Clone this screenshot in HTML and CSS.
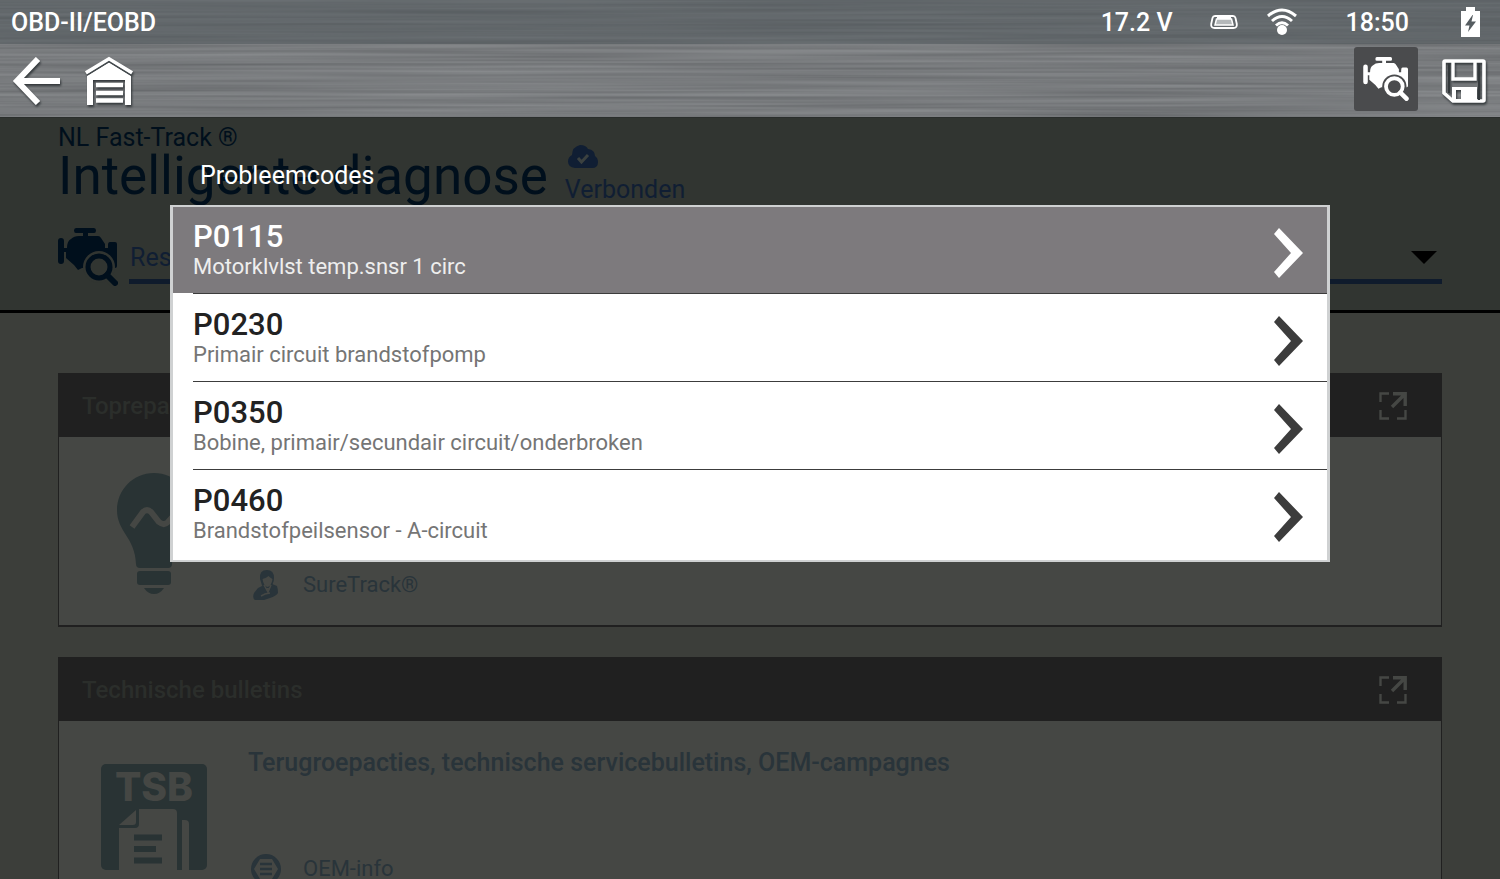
FILE: index.html
```html
<!DOCTYPE html>
<html lang="nl">
<head>
<meta charset="utf-8">
<title>OBD-II/EOBD</title>
<link rel="stylesheet" href="styles.css">
</head>
<body>
<svg class="defs" aria-hidden="true">
  <symbol id="engine" viewBox="0 0 60 58">
    <path d="M18 0h18q2 0 2 2.500t-2 2.500h-6v3h10q2 0 3 2l4 6v4h3v-3q0-3 2-3h5q2 0 2 2v22q0 2-2 2h-5q-2 0-2-2v-3h-3l-3 5H24l-4 2-4-5-8-7v-6H6v9q0 3-3 3t-3-3V13q0-3 3-3t3 3v7h3q0-7 4-9 3-3 8-3h4V5h-7q-2 0-2-2.500T18 0z"/>
    <circle class="knock" cx="41" cy="39" r="16"/>
    <path class="knock-line" d="M50 48l8 8"/>
    <circle class="lens" cx="41" cy="39" r="11"/>
    <path class="handle" d="M49 47l8 8"/>
  </symbol>
  <symbol id="chevron" viewBox="0 0 30 50"><path d="M6 0L30 25 6 50 1 44 18 25 1 6z"/></symbol>
  <symbol id="expand" viewBox="0 0 28 28"><path d="M1.500 10V1.500H10M1.500 18v8.500H10M18 26.500h8.500V18" fill="none" stroke="currentColor" stroke-width="2.400"/><path d="M14 1.800h12.200V14M25 3L13 15" fill="none" stroke="currentColor" stroke-width="3.400"/></symbol>
</svg>

<header class="top">
  <svg class="metal" aria-hidden="true" preserveAspectRatio="none">
    <filter id="brushed" x="0" y="0" width="100%" height="100%" color-interpolation-filters="sRGB">
      <feTurbulence type="fractalNoise" baseFrequency="0.003 0.3" numOctaves="2" seed="8"/>
      <feColorMatrix values="0.170 0 0 0 0.388  0.170 0 0 0 0.398  0.170 0 0 0 0.408  0 0 0 0 1"/>
    </filter>
    <rect width="100%" height="100%" filter="url(#brushed)"/>
  </svg>
  <div class="status">
    <span class="mode">OBD-II/EOBD</span>
    <span class="volt">17.2 V</span>
    <svg class="plug" viewBox="0 0 28 14"><path d="M5 1h18q2 0 2.500 2l1.300 6q.5 4-3.500 4H4.700Q.7 13 1.200 9l1.300-6Q3 1 5 1z" fill="none" stroke="#fff" stroke-width="1.800"/><path d="M6.500 4h15l1.500 6H5z" fill="#b4b8ba" stroke="#fff" stroke-width="1.500"/><path d="M7 3h14" stroke="#fff" stroke-width="2"/></svg>
    <svg class="wifi" viewBox="0 0 30 28"><g fill="none" stroke="#fff" stroke-width="3"><path d="M1 8Q15-4 29 8"/><path d="M5 13Q15 4 25 13"/><path d="M9 17.500Q15 12 21 17.500"/></g><circle cx="15" cy="22" r="5" fill="#fff"/></svg>
    <span class="clock">18:50</span>
    <svg class="battery" viewBox="0 0 19 30"><path d="M5 0h9v4h5v26H0V4h5z" fill="#fff"/><path d="M11.500 8L4 18.500h4.500L7 25l8-10.500h-4.500L12 8z" fill="#555c60"/></svg>
  </div>
  <nav class="tools">
    <button class="tool" aria-label="Terug"><svg class="back" viewBox="0 0 50 48"><path d="M27 2L6 24l21 22M6 24h43" fill="none" stroke="#fff" stroke-width="6"/></svg></button>
    <button class="tool" aria-label="Start"><svg class="home" viewBox="0 0 50 50"><path d="M2 17L25 3l23 14" fill="none" stroke="#fff" stroke-width="4"/><path d="M3 20L25 6.500 47 20v29h-6V24H9v25H3z" fill="#fff"/><path d="M3 19L25 5.500 47 19" fill="none" stroke="#444a4e" stroke-width="1.300"/><path d="M12 29h27M12 37h27M12 44.500h27" stroke="#fff" stroke-width="4.500"/></svg></button>
    <span class="spacer"></span>
    <button class="tool active" aria-label="Motordiagnose"><svg class="engine-light"><use href="#engine"/></svg></button>
    <button class="tool" aria-label="Opslaan"><svg class="save" viewBox="0 0 44 44"><path d="M3 2h38q1 0 1 1v38q0 1-1 1H11L2 34V3q0-1 1-1z" fill="none" stroke="#fff" stroke-width="3.600"/><path d="M11 3v17h22V3" fill="none" stroke="#fff" stroke-width="3.400"/><path d="M7 4v30M37 4v37" stroke="#33383b" stroke-width="2"/><path fill-rule="evenodd" d="M10 28h25v14H10zm4 3h5v9h-5z" fill="#fff"/></svg></button>
  </nav>
</header>

<main>
  <section class="hero">
    <div class="titles">
      <h1><small>NL Fast-Track ®</small>Intelligente diagnose</h1>
      <p class="connected">
        <svg class="cloud" viewBox="0 0 30 24"><path d="M7 23Q0 22 0 16.500 0 12 4 10 4 2 12 0q6 0 8 4 7 1 7 7 3 2 3 6 0 6-6 6z" fill="currentColor"/><path d="M10 13l3.500 4L20 10" fill="none" stroke="#3b4140" stroke-width="3"/></svg>
        Verbonden
      </p>
    </div>
    <div class="picker">
      <svg class="engine-dark"><use href="#engine"/></svg>
      <div class="select-wrap">
        <select aria-label="Resultaten"><option>Resultaten</option></select>
        <svg class="caret" viewBox="0 0 26 13"><path d="M0 0h26L13 13z"/></svg>
      </div>
    </div>
  </section>

  <div class="cards">
    <article class="card">
      <header><h2>Topreparaties</h2><button class="expand" aria-label="Topreparaties vergroten"><svg><use href="#expand"/></svg></button></header>
      <div class="card-body">
        <svg class="bulb" viewBox="0 0 74 121"><path d="M37 0c21 0 37 17 37 37 0 22-18 27-19 54q0 4-4 4H23q-4 0-4-4C18 64 0 59 0 37 0 17 16 0 37 0z" fill="currentColor"/><path d="M15 54l11-15q4-4 8 0l8 10q5 4 9 0l9-10" fill="none" stroke="#454744" stroke-width="6"/><rect x="20" y="98" width="34" height="14" rx="3" fill="currentColor"/><path d="M27 115h20q-4 6-10 6t-10-6z" fill="currentColor"/></svg>
        <div class="info">
          <a class="source" href="#suretrack"><svg class="source-icon" viewBox="0 0 28 30"><path fill="currentColor" d="M8 9Q7 0 15 0q7 0 7 8 0 3-1 5-1 5-6 5t-6-6z"/><path d="M10.500 9q4-1 6-3 2 2 4 3-1 7-5 8-4-1-5-8z" fill="#454744"/><path fill="currentColor" d="M12 15l4 7 4-8 5 2q1 3 1 7-2 3-8 5l-6 2H3q-3-2-1-7l4-5z"/><path d="M9 26l4-2 5-1M12 15l4 7 3-7" fill="none" stroke="#454744" stroke-width="1.500"/></svg><span>SureTrack®</span></a>
        </div>
      </div>
    </article>
    <article class="card">
      <header><h2>Technische bulletins</h2><button class="expand" aria-label="Technische bulletins vergroten"><svg><use href="#expand"/></svg></button></header>
      <div class="card-body">
        <svg class="tsb" viewBox="0 0 106 106"><rect width="106" height="106" rx="5" fill="currentColor"/><text x="53" y="37" text-anchor="middle">TSB</text><path d="M18 106V64h16q4 0 4-4V45h34q4 0 4 4v57z" fill="#454744"/><path d="M18 61L35 46v12q0 3-3 3z" fill="#454744"/><path d="M81 106V56h3q4 0 4 4v46z" fill="#454744"/><path d="M33 73.500h28M33 85h22M33 96.500h28" stroke="currentColor" stroke-width="6"/></svg>
        <div class="info">
          <h3>Terugroepacties, technische servicebulletins, OEM-campagnes</h3>
          <a class="source" href="#oem"><svg class="source-icon" viewBox="0 0 30 30"><circle cx="15" cy="15" r="15" fill="currentColor"/><path d="M9 5h12l6 10-6 10H9L3 15z" fill="#454744"/><path d="M9 10h12M9 15h12M9 20h12" stroke="currentColor" stroke-width="2.400"/></svg><span>OEM-info</span></a>
        </div>
      </div>
    </article>
  </div>
</main>

<section class="dialog" role="dialog" aria-labelledby="dlg">
  <h2 id="dlg">Probleemcodes</h2>
  <ul class="codes">
    <li><button class="code selected"><span class="label"><strong>P0115</strong><span>Motorklvlst temp.snsr 1 circ</span></span><svg><use href="#chevron"/></svg></button></li>
    <li><button class="code"><span class="label"><strong>P0230</strong><span>Primair circuit brandstofpomp</span></span><svg><use href="#chevron"/></svg></button></li>
    <li><button class="code"><span class="label"><strong>P0350</strong><span>Bobine, primair/secundair circuit/onderbroken</span></span><svg><use href="#chevron"/></svg></button></li>
    <li><button class="code"><span class="label"><strong>P0460</strong><span>Brandstofpeilsensor - A-circuit</span></span><svg><use href="#chevron"/></svg></button></li>
  </ul>
</section>
</body>
</html>
```
FILE: styles.css
```css
* { box-sizing: border-box; }
body {
  margin: 0;
  height: 100vh;
  overflow: hidden;
  position: relative;
  font-family: Roboto, "Liberation Sans", sans-serif;
  background: #3c3e3a;
}
h1, h2, h3, p, ul { margin: 0; padding: 0; font-weight: 400; }
button { border: 0; padding: 0; background: none; font: inherit; color: inherit; }
svg { display: block; flex: none; }
.defs { position: absolute; width: 0; height: 0; }

.top { position: relative; color: #fff; background: #74787b; border-bottom: 1px solid #2a2e2c; }
.metal { position: absolute; inset: 0; width: 100%; height: 100%; }
.status {
  position: relative;
  display: flex;
  align-items: center;
  height: 44px;
  padding: 0 20px 0 11px;
  font-size: 25px;
  font-weight: 500;
  background: rgba(72, 80, 84, 0.45);
}
.mode { margin-right: auto; }
.plug { width: 28px; height: 14px; margin: 0 29px 0 37px; }
.wifi { width: 30px; height: 28px; margin-right: 49px; }
.clock { margin-right: 52px; }
.battery { width: 19px; height: 30px; }
.tools { position: relative; display: flex; align-items: center; height: 73px; padding: 0 4px 3px; }
.tool { display: flex; align-items: center; justify-content: center; width: 64px; height: 64px; border-radius: 3px; padding-top: 4px; filter: drop-shadow(1px 2px 1px #33383b); }
.tool + .tool { margin-left: 14px; }
.tool:nth-child(2) { margin-left: 9px; }
.spacer { flex: 1; }
.active { background: #4a4b4d; filter: none; padding-top: 0; }
.back { width: 50px; height: 48px; }
.home { width: 50px; height: 50px; }
.save { width: 44px; height: 44px; }

#engine path, #engine circle { fill: currentColor; }
#engine .knock { fill: var(--back); }
#engine .knock-line { stroke: var(--back); stroke-width: 11; }
#engine .lens { fill: var(--back); stroke: currentColor; stroke-width: 5; }
#engine .handle { stroke: currentColor; stroke-width: 6; stroke-linecap: round; }
.engine-light { width: 50px; height: 44px; color: #fff; --back: #4a4b4d; }
.engine-dark { width: 60px; height: 58px; color: #000f1c; --back: #313531; }

.hero { padding: 6px 58px 24px; background: #313531; border-bottom: 3px solid #000; color: #000f1c; }
.titles { display: flex; align-items: flex-end; gap: 17px; }
h1 { font-size: 53px; line-height: 48px; }
h1 small { display: block; font-size: 25px; line-height: 28px; }
.connected { color: #101e33; font-size: 25px; line-height: 30px; margin-bottom: -5px; }
.cloud { width: 30px; height: 24px; margin: 0 0 6px 3px; }
.picker { display: flex; align-items: flex-end; gap: 11px; margin-top: 28px; }
.select-wrap { flex: 1; display: flex; align-items: center; padding-right: 5px; margin-bottom: 2px; border-bottom: 5px solid #0f1b2c; }
select { flex: 1; height: 44px; border: 0; background: none; appearance: none; font: 25px Roboto, "Liberation Sans", sans-serif; color: #101e33; padding: 0 1px; }
.caret { width: 26px; height: 13px; fill: #000; }

.cards { display: flex; flex-direction: column; gap: 30px; padding: 60px 58px; }
.card { background: #454744; border: 1px solid #202020; border-bottom-width: 2px; color: #29343a; }
.card header { display: flex; align-items: center; justify-content: space-between; height: 63px; padding: 0 34px 0 23px; background: #202020; color: #2b2e2b; }
.card h2 { font-size: 24px; font-weight: 500; }
.expand svg { width: 28px; height: 28px; color: #454744; }
.card-body { display: flex; align-items: center; height: 188px; padding: 4px 0 0 42px; gap: 41px; }
.bulb { width: 106px; height: 121px; color: #293334; }
.tsb { width: 106px; height: 106px; color: #293334; }
.tsb text { font: 800 39px Inter, Roboto, sans-serif; fill: #454744; }
.info { flex: 1; align-self: stretch; display: flex; flex-direction: column; justify-content: space-between; padding: 22px 0 24px; }
h3 { font-size: 25px; line-height: 32px; font-weight: 500; }
.source { display: flex; align-items: center; gap: 22px; margin: auto 0 0 3px; color: inherit; text-decoration: none; font-size: 22px; line-height: 32px; }
.source-icon { width: 30px; height: 30px; }

.dialog { position: absolute; top: 160px; left: 170px; right: 170px; }
.dialog h2 { padding: 0 30px; color: #fff; font-size: 25px; line-height: 32px; margin-bottom: 13px; }
.codes { list-style: none; background: #fff; border: 3px solid #cfd1d2; border-width: 2px 3px; padding-bottom: 3px; }
.code { display: flex; align-items: center; justify-content: space-between; width: 100%; height: 87px; padding: 0 24px 0 20px; text-align: left; color: #333; }
li:first-child .code { height: 86px; }
li + li::before { content: ""; display: block; height: 1px; margin-left: 20px; background: #3c3c3c; }
.label { display: flex; flex-direction: column; color: #757575; font-size: 22px; line-height: 26px; }
.label strong { font-size: 31px; line-height: 34px; font-weight: 500; color: #222; }
.code svg { width: 30px; height: 50px; fill: #3c3c3c; margin-top: 6px; }
.selected { background: #7d7a7d; }
.selected .label { color: #eee; }
.selected .label strong { color: #fff; }
.selected svg { fill: #fff; }
```
